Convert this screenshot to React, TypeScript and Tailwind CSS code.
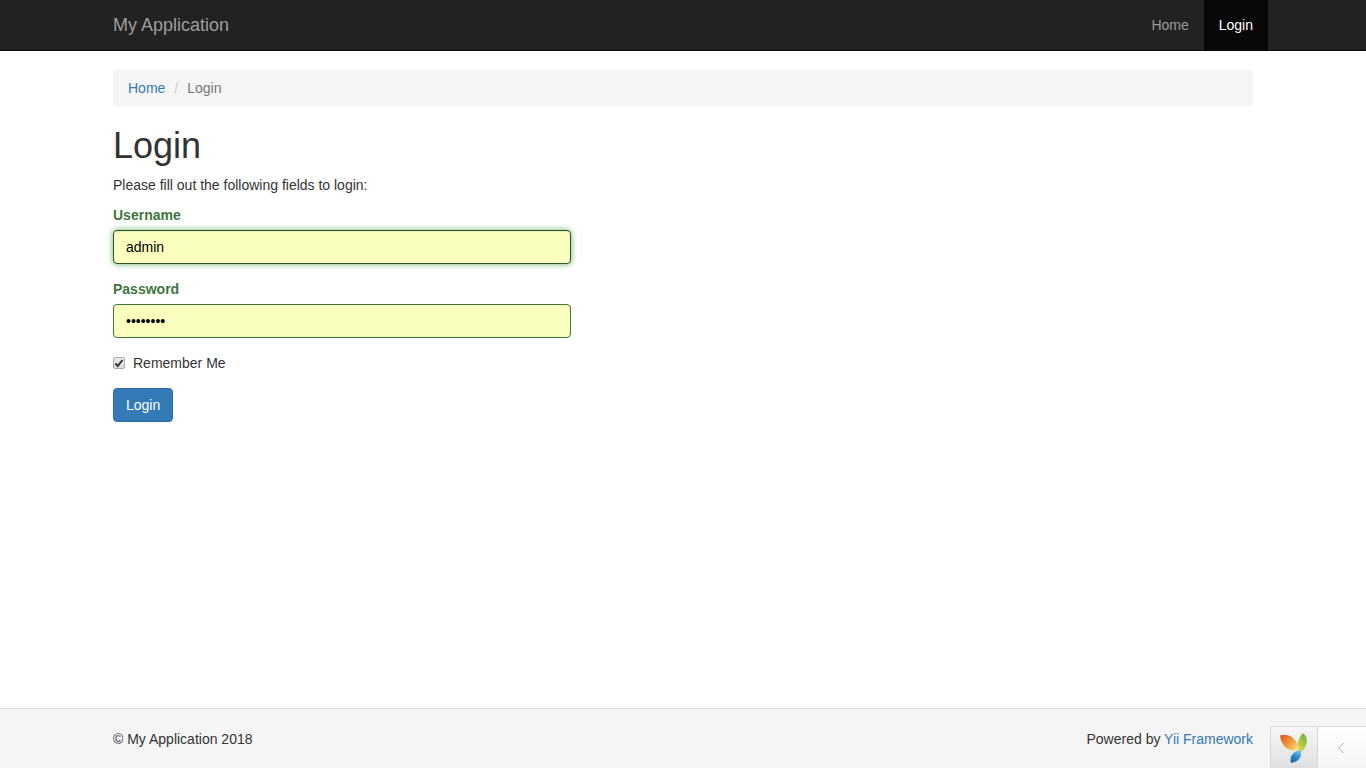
export default function App() {
  return (
    <div className="flex min-h-[768px] flex-col bg-white font-['Liberation_Sans',Arial,sans-serif] text-[14px] leading-[20px] text-[#333]">
      {/* Navbar */}
      <nav className="h-[51px] border-b border-[#080808] bg-[#222]">
        <div className="mx-auto flex h-[50px] w-[1170px] items-center justify-between pl-[15px]">
          <a className="text-[18px] text-[#9d9d9d]">My Application</a>
          <ul className="flex h-full">
            <li className="flex items-center px-[15px] text-[#9d9d9d]">Home</li>
            <li className="flex items-center bg-[#080808] px-[15px] text-white">Login</li>
          </ul>
        </div>
      </nav>

      <main className="mx-auto w-[1170px] flex-1 px-[15px] pt-[19px]">
        <ul className="flex h-[36px] items-center rounded-[4px] bg-[#f5f5f5] px-[15px]">
          <li className="text-[#337ab7]">Home</li>
          <li className="px-[9px] text-[#ccc]">/</li>
          <li className="text-[#777]">Login</li>
        </ul>

        <h1 className="mt-[20px] text-[36px] leading-[40px] text-[#333]">Login</h1>
        <p className="mt-[9px]">Please fill out the following fields to login:</p>

        <form className="mt-[10px] w-[458px]">
          <div className="mb-[15px]">
            <label className="mb-[5px] block font-bold text-[#3c763d]">Username</label>
            <input
              defaultValue="admin"
              className="block h-[34px] w-full rounded-[4px] border border-[#2b542c] bg-[#faffbd] px-[12px] text-black shadow-[inset_0_1px_1px_rgba(0,0,0,0.075),0_0_6px_#67b168] outline-none"
            />
          </div>
          <div className="mb-[15px]">
            <label className="mb-[5px] block font-bold text-[#3c763d]">Password</label>
            <input
              type="password"
              defaultValue="admin123"
              className="block h-[34px] w-full rounded-[4px] border border-[#3c763d] bg-[#faffbd] px-[12px] text-black outline-none"
            />
          </div>
          <label className="flex h-[20px] items-center">
            <span className="relative h-[13px] w-[13px]">
              <input
                type="checkbox"
                defaultChecked
                className="m-0 block h-[12px] w-[12px] appearance-none rounded-[2px] border border-[#a9a9a9] bg-gradient-to-b from-[#ededed] to-[#dcdcdc]"
              />
              <svg className="absolute top-0 left-0" width="12" height="12" viewBox="0 0 12 12" fill="none" stroke="#333" strokeWidth="2">
                <path d="M2.5 6.5 4.8 9 9.5 3" />
              </svg>
            </span>
            <span className="ml-[7px]">Remember Me</span>
          </label>
          <button
            type="button"
            className="mt-[15px] h-[34px] rounded-[4px] border border-[#2e6da4] bg-[#337ab7] px-[12px] text-white"
          >
            Login
          </button>
        </form>
      </main>

      {/* Footer */}
      <footer className="relative h-[60px] border-t border-[#ddd] bg-[#f5f5f5]">
        <div className="mx-auto flex h-full w-[1170px] items-center justify-between px-[15px]">
          <span>© My Application 2018</span>
          <span>
            Powered by <a className="text-[#337ab7]">Yii Framework</a>
          </span>
        </div>
        {/* Debug toolbar stub */}
        <div className="absolute right-0 bottom-0 flex h-[42px] w-[96px] border-t border-l border-[#d8d8d8]">
          <div className="flex w-[47px] items-center justify-center border-r border-[#d8d8d8] bg-gradient-to-b from-[#f7f7f7] to-[#e0e0e0]">
            <svg width="28" height="30" viewBox="0 0 28 30">
              <defs>
                <linearGradient id="yiiOrange" x1="0" y1="0" x2="1" y2="0.7">
                  <stop offset="0" stopColor="#dd4f24" />
                  <stop offset="0.55" stopColor="#f29a3c" />
                  <stop offset="1" stopColor="#f9e27d" />
                </linearGradient>
                <linearGradient id="yiiGreen" x1="0.7" y1="0" x2="0.3" y2="1">
                  <stop offset="0" stopColor="#76b038" />
                  <stop offset="1" stopColor="#d3dc52" />
                </linearGradient>
                <linearGradient id="yiiBlue" x1="0.7" y1="0" x2="0.3" y2="1">
                  <stop offset="0" stopColor="#7cc8e0" />
                  <stop offset="0.5" stopColor="#2f8cca" />
                  <stop offset="1" stopColor="#1a62a8" />
                </linearGradient>
              </defs>
              <path d="M0 2.5C8 0 16 4 20.5 17.5 10 19 1.5 15 0 2.5z" fill="url(#yiiOrange)" />
              <path d="M23 0c5 4 6 12-2 19.5C16.5 14 17 6 23 0z" fill="url(#yiiGreen)" />
              <path d="M20.5 17c2 6-1 11.500-9.500 13C9 24 13 18 20.500 17z" fill="url(#yiiBlue)" />
            </svg>
          </div>
          <div className="flex flex-1 items-center justify-center bg-gradient-to-b from-white to-[#f5f5f5]">
            <svg className="mr-[3px]" width="8" height="12" viewBox="0 0 8 12" fill="none" stroke="#aaa" strokeWidth="1">
              <path d="M6.5 1 1.500 6l5 5" />
            </svg>
          </div>
        </div>
      </footer>
    </div>
  );
}
